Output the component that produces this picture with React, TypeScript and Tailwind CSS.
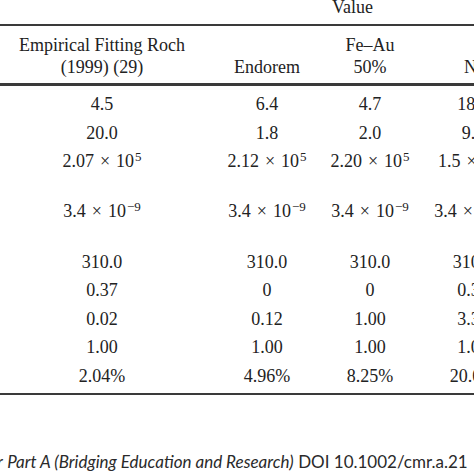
import React from "react";

type Cell = React.ReactNode;

function Sci({ m, e }: { m: string; e: string }) {
  return (
    <span>
      {m}
      <span className="mx-[6px]">×</span>
      10
      <sup className="text-[13px] ml-[1px]">{e}</sup>
    </span>
  );
}

const rows: { h: string; cells: Cell[] }[] = [
  { h: "h-[28.5px]", cells: ["4.5", "6.4", "4.7", "18.5"] },
  { h: "h-[28.5px]", cells: ["20.0", "1.8", "2.0", "9.1"] },
  {
    h: "h-[50px]",
    cells: [
      <Sci m="2.07" e="5" />,
      <Sci m="2.12" e="5" />,
      <Sci m="2.20" e="5" />,
      <Sci m="1.5" e="5" />,
    ],
  },
  {
    h: "h-[50.5px]",
    cells: [
      <Sci m="3.4" e="−9" />,
      <Sci m="3.4" e="−9" />,
      <Sci m="3.4" e="−9" />,
      <Sci m="3.4" e="−9" />,
    ],
  },
  { h: "h-[28.5px]", cells: ["310.0", "310.0", "310.0", "310.0"] },
  { h: "h-[28.5px]", cells: ["0.37", "0", "0", "0.33"] },
  { h: "h-[28.5px]", cells: ["0.02", "0.12", "1.00", "3.30"] },
  { h: "h-[28.5px]", cells: ["1.00", "1.00", "1.00", "1.00"] },
  { h: "h-[28.5px]", cells: ["2.04%", "4.96%", "8.25%", "20.0%"] },
];

const cols = "grid grid-cols-[204px_126px_80px_126px] w-[536px]";

export default function App() {
  return (
    <div className="w-[474px] h-[474px] overflow-hidden bg-white text-[#222] text-[18px] font-['Liberation_Serif','Times_New_Roman',serif]">
      <div className="-mt-[4px] pl-[332px] leading-[22px]">Value</div>
      <div className="mt-[6px] h-[2px] w-full bg-[#3a3a3a]" />

      <div className={`${cols} pt-[8px] items-end leading-[22px] whitespace-nowrap`}>
        <div className="flex flex-col items-center">
          <span>Empirical Fitting Roch</span>
          <span>(1999) (29)</span>
        </div>
        <div className="flex justify-center">Endorem</div>
        <div className="flex flex-col items-center">
          <span>Fe–Au</span>
          <span>50%</span>
        </div>
        <div className="pl-[54px]">NiFe</div>
      </div>
      <div className="mt-[5px] h-[3px] w-full bg-[#3a3a3a]" />

      <div className="pt-[4px] leading-[28.5px] whitespace-nowrap">
        {rows.map((r, i) => (
          <div key={i} className={`${cols} ${r.h} items-start`}>
            {r.cells.map((c, j) => (
              <div key={j} className="flex justify-center">
                {c}
              </div>
            ))}
          </div>
        ))}
      </div>
      <div className="mt-[3px] h-[2px] w-full bg-[#3a3a3a]" />

      <div className="mt-[57px] leading-[20px] text-[17px] text-[#2a2a2a] whitespace-nowrap font-['Lato','Open_Sans',sans-serif]">
        <span className="italic -ml-[3px]">r</span>{" "}
        <span className="italic">Part A (Bridging Education and Research)</span>{" "}
        <span>DOI 10.1002/cmr.a.21</span>
      </div>
    </div>
  );
}
